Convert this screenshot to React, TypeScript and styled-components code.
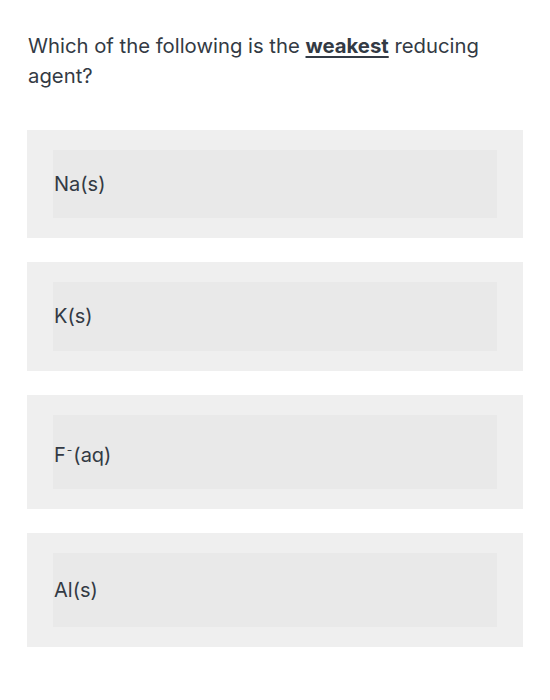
import React from 'react'
import styled, { createGlobalStyle } from 'styled-components'

const GlobalStyle = createGlobalStyle`
  body {
    margin: 0;
    background: #ffffff;
    font-family: Inter, "Liberation Sans", Arial, sans-serif;
    color: #333a44;
  }
`

const Page = styled.div`
  padding: 31px 27px 40px 27px;
  width: 496px;
`

const Question = styled.p`
  margin: 0 0 39px 1px;
  max-width: 480px;
  font-size: 20.3px;
  line-height: 30px;
`

const Strong = styled.span`
  font-weight: 700;
  text-decoration: underline;
  text-decoration-thickness: 2px;
  text-underline-offset: 3px;
`

const OptionList = styled.div`
  display: flex;
  flex-direction: column;
  gap: 24px;
`

const Option = styled.div`
  background: #efefef;
  padding: 20px 26px;
`

const OptionInner = styled.div<{ $top: number; $bottom: number }>`
  background: #e9e9e9;
  padding: ${({ $top }) => $top}px 1px ${({ $bottom }) => $bottom}px;
  font-size: 20px;
  line-height: 28px;
`

const Sup = styled.sup`
  font-size: 12px;
  line-height: 0;
  vertical-align: 8px;
  margin: 0 1px;
`

const options: { id: number; label: React.ReactNode; top: number; bottom: number }[] = [
  { id: 1, label: 'Na(s)', top: 20, bottom: 20 },
  { id: 2, label: 'K(s)', top: 20, bottom: 21 },
  { id: 3, label: <>F<Sup>-</Sup>(aq)</>, top: 26, bottom: 20 },
  { id: 4, label: 'Al(s)', top: 23, bottom: 23 }
]

const App: React.FC = () => {
  return (
    <Page>
      <GlobalStyle />
      <Question>
        Which of the following is the <Strong>weakest</Strong> reducing agent?
      </Question>
      <OptionList>
        {options.map((opt) => (
          <Option key={opt.id}>
            <OptionInner $top={opt.top} $bottom={opt.bottom}>{opt.label}</OptionInner>
          </Option>
        ))}
      </OptionList>
    </Page>
  )
}

export default App
